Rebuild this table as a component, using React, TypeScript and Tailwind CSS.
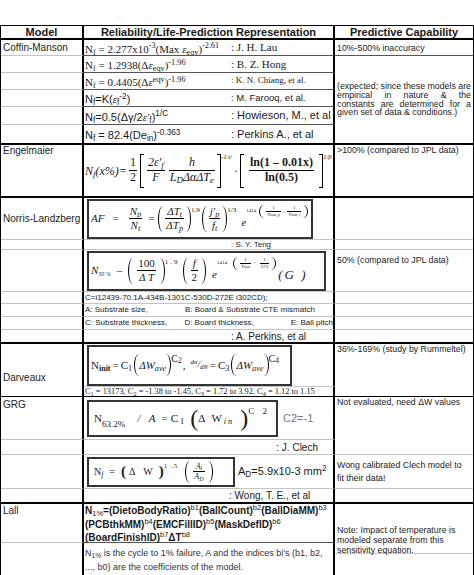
import type { ReactNode } from "react"

const serif = "font-['Liberation_Serif','Times_New_Roman',serif]"
const cols = "grid grid-cols-[83px_251px_1fr]"
const c1 = "border-r-2 border-black px-[2px] text-[10px] leading-[11px] text-[#222] whitespace-nowrap"
const c2 = "border-r-2 border-black"
const c3 = "px-[2px] text-[8.8px] leading-[10px] text-[#222]"
const lineLight = "border-b border-b-[#c4c4c4]"
const lineDark = "border-b border-b-[#555]"
const box = "border-2 border-[#333] flex items-center"

function Frac({ n, d, className = "" }: { n: ReactNode; d: ReactNode; className?: string }) {
  return (
    <span className={`inline-flex flex-col items-center mx-[2px] ${className}`}>
      <span className="px-[1px] leading-[1.15] whitespace-nowrap">{n}</span>
      <span className="self-stretch border-t border-black px-[1px] text-center leading-[1.15] whitespace-nowrap">{d}</span>
    </span>
  )
}

// parentheses and brackets drawn with borders
function LP({ className = "" }: { className?: string }) {
  return <span className={`inline-block w-[5px] shrink-0 border-l border-black rounded-l-[100%_50%] ${className}`} />
}
function RP({ className = "" }: { className?: string }) {
  return <span className={`inline-block w-[5px] shrink-0 border-r border-black rounded-r-[100%_50%] ${className}`} />
}
function LB({ className = "" }: { className?: string }) {
  return <span className={`inline-block w-[4px] shrink-0 border-l border-y border-black ${className}`} />
}
function RB({ className = "" }: { className?: string }) {
  return <span className={`inline-block w-[4px] shrink-0 border-r border-y border-black ${className}`} />
}

function Ref({ f, r, line = true }: { f: ReactNode; r: ReactNode; line?: boolean }) {
  return (
    <div className={`${c2} ${line ? lineDark : ""} flex items-center pl-[1px] whitespace-nowrap overflow-hidden`}>
      <div className="w-[146px] shrink-0">{f}</div>
      {r}
    </div>
  )
}

export default function App() {
  return (
    <div className="w-[474px] h-[575px] overflow-hidden bg-white text-[#1a1a1a] font-['Liberation_Sans',Arial,sans-serif]">
      <div className="h-[25px]" />
      <div className="w-[474px] border-x border-t border-black">
        {/* Header */}
        <div className={`${cols} h-[12px] text-[11px] font-bold leading-[12px] text-center whitespace-nowrap`}>
          <div className="border-r-2 border-black">Model</div>
          <div className="border-r-2 border-black">Reliability/Life-Prediction Representation</div>
          <div>Predictive Capability</div>
        </div>

        {/* Coffin-Manson */}
        <div className={`${cols} grid-rows-[16px_17px_17px_17px_18px_18px] border-t-2 border-black`}>
          <div className={`${c1} ${lineLight} flex items-center`}>Coffin-Manson</div>
          <Ref
            f={<span className={`${serif} text-[11px]`}>N<sub>f</sub> = 2.277x10<sup>-3</sup>(Max <i>ε</i><sub>eqv</sub>)<sup>-2.61</sup></span>}
            r={<span className={`${serif} text-[11px]`}>: J. H. Lau</span>}
          />
          <div className={`${c3} ${lineDark} flex items-center`}>10%-500% inaccuracy</div>

          <div className={`${c1} ${lineLight}`} />
          <Ref
            f={<span className={`${serif} text-[11px]`}>N<sub>f</sub> = 1.2938(Δ<i>ε</i><sub>eqv</sub>)<sup>-1.96</sup></span>}
            r={<span className={`${serif} text-[11px]`}>: B. Z. Hong</span>}
          />
          <div className={`${c3} row-span-5 flex items-center`}>
            <p className="text-justify leading-[8.6px]">
              (expected; since these models are empirical in nature &amp; the constants are determined for a given set of data &amp; conditions.)
            </p>
          </div>

          <div className={`${c1} ${lineLight}`} />
          <Ref
            f={<span className={`${serif} text-[11px]`}>N<sub>f</sub> = 0.4405(Δ<i>ε</i><sup>eqv</sup>)<sup>-1.96</sup></span>}
            r={<span className={`${serif} text-[9px]`}>: K. N. Chiang, et al.</span>}
          />

          <div className={`${c1} ${lineLight}`} />
          <Ref
            f={<span className="text-[11px]">N<sub>f</sub>=K(<i className={serif}>ε</i><sub>f</sub><sup>-2</sup>)</span>}
            r={<span className="text-[9.5px]">: M. Farooq, et al.</span>}
          />

          <div className={`${c1} ${lineLight}`} />
          <Ref
            f={<span className="text-[11px]">N<sub>f</sub>=0.5(Δγ/2<i className={serif}>ε'</i><sub>f</sub>)<sup>1/C</sup></span>}
            r={<span className="text-[11px]">: Howieson, M., et al</span>}
          />

          <div className={c1} />
          <Ref
            line={false}
            f={<span className="text-[11px]">N<sub>f</sub> = 82.4(De<sub>in</sub>)<sup>-0.363</sup></span>}
            r={<span className="text-[11px]">: Perkins A., et al</span>}
          />
        </div>

        {/* Engelmaier */}
        <div className={`${cols} grid-rows-[51px] border-t-2 border-black`}>
          <div className={c1}>Engelmaier</div>
          <div className={`${c2} ${serif} flex items-center pl-[1px] text-[12px] italic whitespace-nowrap`}>
            <span>N<sub>f</sub>(x%)=</span>
            <Frac n="1" d="2" className="not-italic" />
            <LB className="h-[34px] ml-[1px]" />
            <Frac n={<>2ε'<sub>f</sub></>} d="F" className="ml-[3px]" />
            <Frac n="h" d={<>L<sub>D</sub>ΔαΔT<sub>e</sub></>} className="ml-[2px]" />
            <RB className="h-[34px]" />
            <span className="self-start mt-[7px] text-[7px]">-1/c</span>
            <span className="mx-[2px] not-italic">·</span>
            <LB className="h-[34px]" />
            <Frac n="ln(1 – 0.01x)" d="ln(0.5)" className="not-italic font-bold mx-[5px]" />
            <RB className="h-[34px]" />
            <span className="self-start mt-[7px] text-[7px]">1/β</span>
          </div>
          <div className={c3}>&gt;100% (compared to JPL data)</div>
        </div>

        {/* Norris-Landzberg */}
        <div className={`${cols} grid-rows-[42px_10px_42px_12px_13px_13px_12px] border-t-2 border-black`}>
          <div className={`${c1} ${lineLight} flex items-center`}>Norris-Landzberg</div>
          <div className={`${c2} ${lineLight} flex items-center pl-[3px]`}>
            <div className={`${box} ${serif} italic text-[11px] h-[40px] w-[226px] pl-[2px] whitespace-nowrap`}>
              <span>AF</span>
              <span className="mx-[8px] not-italic">=</span>
              <Frac n={<>N<sub>p</sub></>} d={<>N<sub>t</sub></>} />
              <span className="mx-[4px] not-italic">=</span>
              <LP className="h-[26px]" />
              <Frac n={<>ΔT<sub>t</sub></>} d={<>ΔT<sub>p</sub></>} />
              <RP className="h-[26px]" />
              <span className="self-start mt-[4px] text-[7px] not-italic">1.9</span>
              <LP className="h-[26px] ml-[2px]" />
              <Frac n={<>j'<sub>p</sub></>} d={<>f<sub>t</sub></>} />
              <RP className="h-[26px]" />
              <span className="self-start mt-[4px] text-[7px] not-italic">1/3</span>
              <span className="ml-[5px] mt-[8px]">e</span>
              <span className="self-start mt-[4px] flex items-center text-[5px] not-italic">
                <span className="mr-[3px]">1414</span>
                <LP className="h-[13px]" />
                <Frac n="1" d={<i>T<sub>max, p</sub></i>} />
                <span>,</span>
                <Frac n="1" d={<i>T<sub>max, t</sub></i>} className="ml-[3px]" />
                <RP className="h-[13px]" />
              </span>
            </div>
          </div>
          <div className={`${c3} ${lineLight}`} />

          <div className={`${c1} ${lineLight}`} />
          <div className={`${c2} ${lineLight} pl-[147px] text-[8px] leading-[9px] whitespace-nowrap`}>: S. Y. Teng</div>
          <div className={`${c3} ${lineLight}`} />

          <div className={`${c1} ${lineLight}`} />
          <div className={`${c2} ${lineLight} flex items-center pl-[3px]`}>
            <div className={`${box} ${serif} italic text-[11px] h-[40px] w-[239px] pl-[2px] whitespace-nowrap`}>
              <span>N<sub className="text-[6px]">50 %</sub></span>
              <span className="mx-[6px] not-italic">–</span>
              <LP className="h-[26px]" />
              <Frac n={<span className="not-italic">100</span>} d="Δ T" className="mx-[4px]" />
              <RP className="h-[26px]" />
              <span className="self-start mt-[4px] text-[7px] not-italic tracking-[2px]">1.9</span>
              <LP className="h-[26px] ml-[3px]" />
              <Frac n="f" d={<span className="not-italic">2</span>} className="mx-[3px]" />
              <RP className="h-[26px]" />
              <span className="ml-[6px] mt-[8px]">e</span>
              <span className="self-start mt-[4px] flex items-center text-[5px] not-italic">
                <span className="mr-[6px]">1414</span>
                <LP className="h-[13px]" />
                <Frac n="1" d={<i>T<sub>max</sub></i>} />
                <span className="mx-[1px]">-</span>
                <Frac n="1" d="373" className="ml-[3px]" />
                <RP className="h-[13px]" />
              </span>
              <span className="ml-[2px] mt-[8px] text-[13px] tracking-[2px]">(G )</span>
            </div>
          </div>
          <div className={`${c3} ${lineLight} pt-[5px] whitespace-nowrap`}>50% (compared to JPL data)</div>

          <div className={`${c1} ${lineLight}`} />
          <div className={`${c2} ${lineLight} pl-[1px] text-[8px] leading-[11px] whitespace-nowrap`}>C=i12439-70.1A-434B-1301C-530D-272E i302CD);</div>
          <div className={`${c3} ${lineLight}`} />

          <div className={`${c1} ${lineLight}`} />
          <div className={`${c2} ${lineLight} flex items-center pl-[1px] text-[8px] whitespace-nowrap`}>
            <span className="w-[100px]">A: Substrate size,</span>
            <span>B: Board &amp; Substrate CTE mismatch</span>
          </div>
          <div className={`${c3} ${lineLight}`} />

          <div className={`${c1} ${lineLight}`} />
          <div className={`${c2} ${lineLight} flex items-center pl-[1px] text-[8px] whitespace-nowrap`}>
            <span className="w-[100px]">C: Substrate thickness,</span>
            <span className="w-[107px]">D: Board thickness,</span>
            <span>E: Ball pitch</span>
          </div>
          <div className={`${c3} ${lineLight}`} />

          <div className={c1} />
          <div className={`${c2} flex items-center pl-[147px] text-[10px] whitespace-nowrap`}>: A. Perkins, et al</div>
          <div className={c3} />
        </div>

        {/* Darveaux */}
        <div className={`${cols} grid-rows-[43px_9px] border-t-2 border-black`}>
          <div className={`${c1} row-span-2 flex items-end pb-[13px]`}>Darveaux</div>
          <div className={`${c2} ${lineLight} flex items-center pl-[3px]`}>
            <div className={`${box} ${serif} text-[11px] h-[41px] w-[205px] pl-[2px] whitespace-nowrap`}>
              <span>N<sub className="text-[8px] font-bold">init</sub></span>
              <span className="mx-[2px]">=</span>
              <span>C<sub>1</sub></span>
              <LP className="h-[22px] ml-[2px]" />
              <span className="italic">ΔW<sub>ave</sub></span>
              <RP className="h-[22px]" />
              <span className="self-start mt-[4px] text-[10px]">C<sub>2</sub></span>
              <span className="ml-[1px] mr-[5px]">,</span>
              <span className="italic text-[9px]"><sup>dα</sup>/<sub>dN</sub></span>
              <span className="mx-[2px]">=</span>
              <span>C<sub>3</sub></span>
              <LP className="h-[22px] ml-[2px]" />
              <span className="italic">ΔW<sub>ave</sub></span>
              <RP className="h-[22px]" />
              <span className="self-start mt-[4px] text-[10px]">C<sub>4</sub></span>
            </div>
          </div>
          <div className={`${c3} row-span-2 whitespace-nowrap`}>36%-169% (study by Rummeltel)</div>
          <div className={`${c2} ${serif} pl-[1px] text-[8.4px] leading-[9px] whitespace-nowrap`}>
            C<sub>1</sub> = 13173, C<sub>2</sub> = -1.38 to -1.45, C<sub>3</sub> = 1.72 to 3.92, C<sub>4</sub> = 1.12 to 1.15
          </div>
        </div>

        {/* GRG */}
        <div className={`${cols} grid-rows-[43px_15px_34px_13px] border-t border-black`}>
          <div className={`${c1} ${lineLight} pt-[2px]`}>GRG</div>
          <div className={`${c2} ${lineLight} flex items-center pl-[3px]`}>
            <div className={`${box} ${serif} text-[11px] h-[37px] w-[191px] pl-[5px] whitespace-nowrap`}>
              <span>N<sub className="text-[9px] bottom-[-0.6em]">63.2%</sub></span>
              <span className="ml-[12px] italic tracking-[3px]">/ A</span>
              <span className="mx-[3px]">=</span>
              <span className="tracking-[2px]">C<sub>1</sub></span>
              <span className="ml-[4px] text-[24px] leading-none">(</span>
              <span className="tracking-[2px]">Δ W<sub className="italic">in</sub></span>
              <span className="text-[24px] leading-none ml-[6px]">)</span>
              <span className="self-start mt-[3px] text-[9px] tracking-[3px]">C 2</span>
            </div>
            <span className="ml-[5px] text-[11px] text-[#777]">C2=-1</span>
          </div>
          <div className={`${c3} ${lineLight} row-span-2 whitespace-nowrap`}>Not evaluated, need ΔW values</div>

          <div className={`${c1} ${lineLight}`} />
          <div className={`${c2} ${lineLight} flex items-center justify-end pr-[15px] text-[10px] whitespace-nowrap`}>: J. Clech</div>

          <div className={`${c1} ${lineLight}`} />
          <div className={`${c2} ${lineLight} flex items-center pl-[3px]`}>
            <div className={`${box} ${serif} text-[10px] h-[30px] w-[148px] pl-[5px] whitespace-nowrap`}>
              <span>N<sub className="italic">f</sub></span>
              <span className="mx-[6px]">=</span>
              <span className="text-[15px] font-bold leading-none">(</span>
              <span className="mx-[3px] tracking-[3px]">Δ W</span>
              <span className="text-[15px] font-bold leading-none">)</span>
              <span className="self-start mt-[2px] text-[7px] tracking-[1px]">1 .5</span>
              <LP className="h-[22px] ml-[7px]" />
              <Frac n={<i>A<sub>i</sub></i>} d={<i>A<sub>D</sub></i>} className="mx-[3px] text-[8px]" />
              <RP className="h-[22px]" />
            </div>
            <span className="ml-[3px] text-[11px] whitespace-nowrap">A<sub>D</sub>=5.9x10-3 mm<sup>2</sup></span>
          </div>
          <div className={`${c3} ${lineLight} flex items-center leading-[13px]`}>
            <p>Wong calibrated Clech model to<br />fit their data!</p>
          </div>

          <div className={c1} />
          <div className={`${c2} flex items-center pl-[145px] text-[10px] whitespace-nowrap`}>: Wong, T. E., et al</div>
          <div className={c3} />
        </div>

        {/* Lall */}
        <div className={`${cols} grid-rows-[39px_40px] border-t-2 border-black`}>
          <div className={`${c1} ${lineLight} pt-[1px]`}>Lall</div>
          <div className={`${c2} ${lineDark} pl-[1px] text-[10px] font-bold leading-[13.5px] whitespace-nowrap`}>
            N<sub className="font-normal">1%</sub>=(DietoBodyRatio)<sup className="font-normal">b1</sup>(BallCount)<sup className="font-normal">b2</sup>(BallDiaMM)<sup className="font-normal">b3</sup>
            <br />
            (PCBthkMM)<sup className="font-normal">b4</sup>(EMCFillID)<sup className="font-normal">b5</sup>(MaskDefID)<sup className="font-normal">b6</sup>
            <br />
            (BoardFinishID)<sup className="font-normal">b7</sup>ΔT<sup className="font-normal">b8</sup>
          </div>
          <div className={`${c3} row-span-2 !px-0 flex flex-col`}>
            <div className={`h-[50px] ${lineLight} px-[2px] pt-[21px]`}>
              Note: Impact of temperature is
              <br />
              modeled separate from this
              <br />
              sensitivity equation.
            </div>
          </div>
          <div className={c1} />
          <div className={`${c2} pl-[1px] pt-[3px] text-[9px] leading-[14px] text-[#333] whitespace-nowrap`}>
            N<sub>1%</sub> is the cycle to 1% failure, A and the indices bi's (b1, b2,
            <br />
            ..., b0) are the coefficients of the model.
          </div>
        </div>
      </div>
    </div>
  )
}
